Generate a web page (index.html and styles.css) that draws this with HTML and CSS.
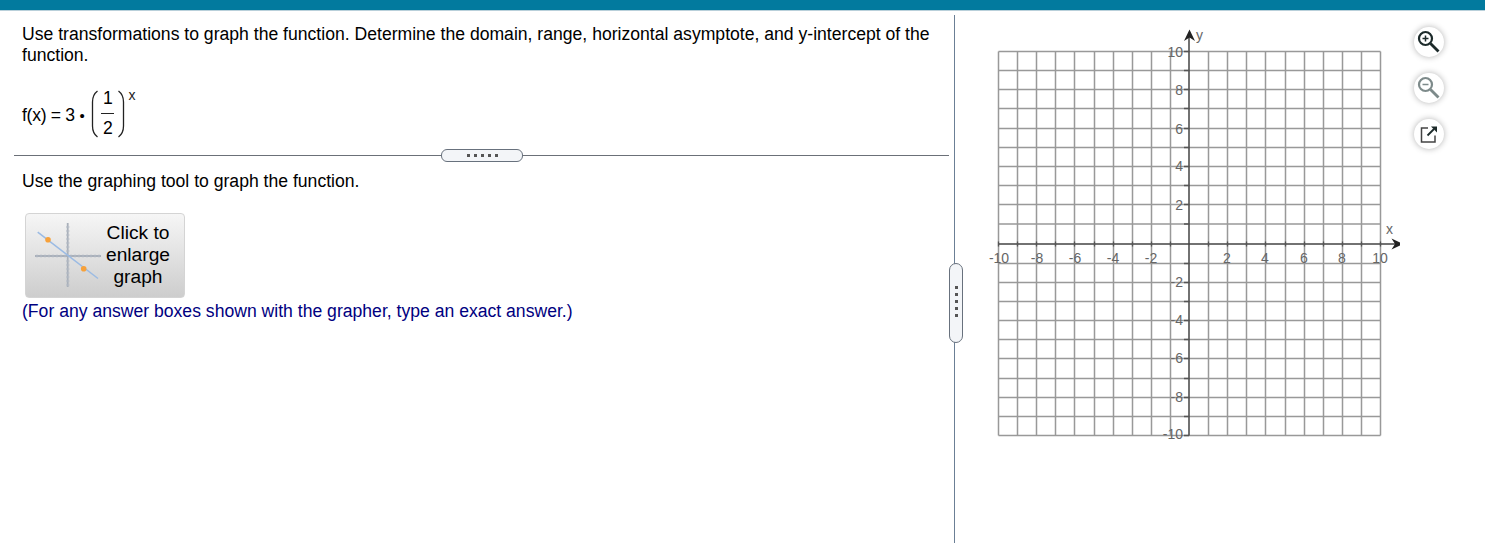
FILE: index.html
```html
<!DOCTYPE html>
<html lang="en">
<head>
<meta charset="utf-8">
<title>Graph the function</title>
<link rel="stylesheet" href="styles.css">
</head>
<body>
<header class="topbar"></header>
<main class="workspace">
  <section class="left-pane">
    <div class="question">
      <p class="prompt">Use transformations to graph the function. Determine the domain, range, horizontal asymptote, and y-intercept of the function.</p>
      <div class="formula">
        <span class="formula-lead">f(x) = 3 <span class="dot">•</span></span>
        <svg class="paren" viewBox="0 0 8 48" aria-hidden="true"><path d="M6.500 1 C2.500 4 1.500 7 1.500 12 L1.500 36 C1.500 41 2.500 44 6.500 47"/></svg>
        <span class="fraction"><span class="num">1</span><span class="den">2</span></span>
        <svg class="paren" viewBox="0 0 8 48" aria-hidden="true"><path d="M1.500 1 C5.500 4 6.500 7 6.500 12 L6.500 36 C6.500 41 5.500 44 1.500 47"/></svg>
        <span class="exponent">x</span>
      </div>
    </div>
    <div class="divider"><span class="h-handle"><i></i><i></i><i></i><i></i><i></i></span></div>
    <div class="answer">
      <p class="instruction">Use the graphing tool to graph the function.</p>
      <button class="enlarge" type="button">
        <svg class="enlarge-icon" viewBox="0 0 70 66" aria-hidden="true">
          <path class="mini-axis" d="M33.700 0 V64 M1 33 H67"/>
          <path class="mini-ticks" d="M3 31.500 V34.500 M7 31.500 V34.500 M11 31.500 V34.500 M15 31.500 V34.500 M19 31.500 V34.500 M23 31.500 V34.500 M27 31.500 V34.500 M31 31.500 V34.500 M37 31.500 V34.500 M41 31.500 V34.500 M45 31.500 V34.500 M49 31.500 V34.500 M53 31.500 V34.500 M57 31.500 V34.500 M61 31.500 V34.500 M65 31.500 V34.500 M32 4 H35.500 M32 8 H35.500 M32 12 H35.500 M32 16 H35.500 M32 20 H35.500 M32 24 H35.500 M32 28 H35.500 M32 38 H35.500 M32 42 H35.500 M32 46 H35.500 M32 50 H35.500 M32 54 H35.500 M32 58 H35.500 M32 62 H35.500"/>
          <path class="mini-line" d="M3.700 9.200 L64 55.500"/>
          <circle class="mini-point" cx="14" cy="16.800" r="2.800"/>
          <circle class="mini-point" cx="49.700" cy="45.800" r="2.800"/>
        </svg>
        <span class="enlarge-label">Click to enlarge graph</span>
      </button>
      <p class="note">(For any answer boxes shown with the grapher, type an exact answer.)</p>
    </div>
    <span class="v-handle"><i></i><i></i><i></i><i></i><i></i></span>
  </section>
  <section class="graph-pane">
    <svg class="graph" viewBox="980 15 420 440" aria-label="Coordinate grid">
      <path class="grid" d="M998.500 51.500 V435.500 M1017.500 51.500 V435.500 M1036.500 51.500 V435.500 M1055.500 51.500 V435.500 M1074.500 51.500 V435.500 M1094.500 51.500 V435.500 M1113.500 51.500 V435.500 M1132.500 51.500 V435.500 M1151.500 51.500 V435.500 M1170.500 51.500 V435.500 M1208.500 51.500 V435.500 M1227.500 51.500 V435.500 M1246.500 51.500 V435.500 M1265.500 51.500 V435.500 M1285.500 51.500 V435.500 M1304.500 51.500 V435.500 M1323.500 51.500 V435.500 M1342.500 51.500 V435.500 M1361.500 51.500 V435.500 M1380.500 51.500 V435.500"/>
      <path class="grid" d="M998.500 51.500 H1380.500 M998.500 70.500 H1380.500 M998.500 89.500 H1380.500 M998.500 108.500 H1380.500 M998.500 128.500 H1380.500 M998.500 147.500 H1380.500 M998.500 166.500 H1380.500 M998.500 185.500 H1380.500 M998.500 204.500 H1380.500 M998.500 224 H1380.500 M998.500 263.500 H1380.500 M998.500 282.500 H1380.500 M998.500 301.500 H1380.500 M998.500 320.500 H1380.500 M998.500 339.500 H1380.500 M998.500 358.500 H1380.500 M998.500 378.500 H1380.500 M998.500 397.500 H1380.500 M998.500 416.500 H1380.500 M998.500 435.500 H1380.500"/>
      <path class="axis" d="M998 244 H1396 M1189 435.500 V36"/>
      <path class="arrow" d="M1189.500 29.500 L1195 41 L1189.500 37.500 L1184 41 Z M1403 244 L1391.500 238.500 L1395 244 L1391.500 249.500 Z"/>
      <path class="ticks" d="M998.500 241.500 V246.500 M1017.500 241.500 V246.500 M1036.500 241.500 V246.500 M1055.500 241.500 V246.500 M1074.500 241.500 V246.500 M1094.500 241.500 V246.500 M1113.500 241.500 V246.500 M1132.500 241.500 V246.500 M1151.500 241.500 V246.500 M1170.500 241.500 V246.500 M1208.500 241.500 V246.500 M1227.500 241.500 V246.500 M1246.500 241.500 V246.500 M1265.500 241.500 V246.500 M1285.500 241.500 V246.500 M1304.500 241.500 V246.500 M1323.500 241.500 V246.500 M1342.500 241.500 V246.500 M1361.500 241.500 V246.500 M1380.500 241.500 V246.500"/>
      <path class="ticks" d="M1184 51.500 H1189 M1184 70.500 H1189 M1184 89.500 H1189 M1184 108.500 H1189 M1184 128.500 H1189 M1184 147.500 H1189 M1184 166.500 H1189 M1184 185.500 H1189 M1184 204.500 H1189 M1184 224 H1189 M1184 263.500 H1189 M1184 282.500 H1189 M1184 301.500 H1189 M1184 320.500 H1189 M1184 339.500 H1189 M1184 358.500 H1189 M1184 378.500 H1189 M1184 397.500 H1189 M1184 416.500 H1189 M1184 435.500 H1189"/>
      <g class="labels-x">
        <text x="999" y="263">-10</text><text x="1037" y="263">-8</text><text x="1075" y="263">-6</text><text x="1113" y="263">-4</text><text x="1151" y="263">-2</text>
        <text x="1227" y="263">2</text><text x="1265" y="263">4</text><text x="1304" y="263">6</text><text x="1342" y="263">8</text><text x="1380" y="263">10</text>
      </g>
      <g class="labels-y">
        <text x="1183" y="57">10</text><text x="1183" y="95">8</text><text x="1183" y="134">6</text><text x="1183" y="171">4</text><text x="1183" y="210">2</text>
        <text x="1183" y="287">-2</text><text x="1183" y="325">-4</text><text x="1183" y="363">-6</text><text x="1183" y="402">-8</text><text x="1183" y="439">-10</text>
      </g>
      <text class="axis-name" x="1196" y="40">y</text>
      <text class="axis-name" x="1386" y="234">x</text>
    </svg>
    <nav class="tools">
      <button class="tool" type="button" aria-label="Zoom in">
        <svg viewBox="0 0 30 30"><circle class="tool-dark" cx="11.500" cy="11.500" r="6.500"/><path class="tool-dark tool-thick" d="M16.500 16.500 L24.500 24.500"/><path class="tool-dark tool-thin" d="M8.500 11.500 H14.500 M11.500 8.500 V14.500"/></svg>
      </button>
      <button class="tool" type="button" aria-label="Zoom out">
        <svg viewBox="0 0 30 30"><circle class="tool-grey" cx="11.500" cy="11.500" r="6.500"/><path class="tool-grey tool-thick" d="M16.500 16.500 L24.500 24.500"/><path class="tool-grey tool-thin" d="M8.500 11.500 H14.500"/></svg>
      </button>
      <button class="tool" type="button" aria-label="Open in new window">
        <svg viewBox="0 0 30 30"><path class="tool-box" d="M14 9 H7.500 V23 H21 V16.500"/><path class="tool-dark tool-arrow" d="M13.500 16.500 L20 10"/><path class="tool-fill" d="M17 7.500 H23 V13.500 Z"/></svg>
      </button>
    </nav>
  </section>
</main>
</body>
</html>
```
FILE: styles.css
```css
* { box-sizing: border-box; }
html, body { margin: 0; height: 100%; }
body {
  display: flex;
  flex-direction: column;
  height: 543px;
  overflow: hidden;
  background: #fff;
  color: #000;
  font-family: "Liberation Sans", Arial, sans-serif;
  font-size: 17.6px;
  line-height: 22px;
}
p { margin: 0; }
.topbar {
  flex: none;
  height: 11px;
  background: #027a9e;
  border-bottom: 1px solid #b9d0da;
}
.workspace {
  flex: 1;
  display: flex;
  margin-top: 4px;
  min-height: 0;
}
.left-pane {
  position: relative;
  flex: none;
  width: 955px;
  border-right: 1px solid #6b7f95;
}
.question { height: 140px; padding: 9px 20px 0 22px; }
.prompt { line-height: 21px; }
.formula {
  display: flex;
  align-items: center;
  height: 48px;
  margin-top: 24px;
}
.formula-lead { margin: 2px 7px 0 0; letter-spacing: -0.3px; white-space: nowrap; }
.dot { font-size: 15px; }
.paren { width: 8px; height: 48px; flex: none; }
.paren path { fill: none; stroke: #222; stroke-width: 1.300; }
.fraction {
  display: flex;
  flex-direction: column;
  align-items: center;
  width: 13px;
  margin: 0 3px 0 2px;
}
.num { width: 100%; padding-bottom: 4px; text-align: center; border-bottom: 1px solid #222; }
.den { width: 100%; padding: 3px 0 2px; text-align: center; }
.exponent { align-self: flex-start; margin: -4px 0 0 3px; font-size: 14px; line-height: 18px; color: #222; }
.divider {
  position: relative;
  height: 1px;
  margin: 0 5px 0 14px;
  background: #6b7078;
}
.h-handle, .v-handle {
  position: absolute;
  display: flex;
  align-items: center;
  justify-content: center;
  background: #f3f5f8;
  border: 1px solid #68717d;
}
.h-handle { left: 427px; top: -6px; width: 82px; height: 13px; gap: 4px; border-radius: 6px; }
.h-handle i, .v-handle i { display: block; width: 3px; height: 3px; background: #555; }
.v-handle {
  right: -9px;
  top: 248px;
  width: 14px;
  height: 80px;
  flex-direction: column;
  gap: 4px;
  padding-bottom: 4px;
  border-radius: 7px;
}
.answer { padding: 14px 20px 0 22px; }
.instruction { height: 22px; }
.enlarge {
  display: flex;
  align-items: center;
  width: 160px;
  height: 85px;
  margin: 21px 0 0 3px;
  padding: 0;
  border: 1px solid #d4d4d4;
  border-radius: 4px;
  background: linear-gradient(#f6f6f6, #cdcdcd);
  font: inherit;
  font-size: 19.2px;
  color: #000;
}
.enlarge-icon { flex: none; width: 70px; height: 66px; margin-left: 8px; }
.mini-axis { fill: none; stroke: #a9b0ba; stroke-width: 1.800; }
.mini-ticks { fill: none; stroke: #b4bbc6; stroke-width: 1; }
.mini-line { fill: none; stroke: #9bbbe4; stroke-width: 1.500; }
.mini-point { fill: #f7a13a; }
.enlarge-label { flex: none; width: 70px; margin: -2px 0 0 -1px; text-align: center; }
.note { margin-top: 2px; color: #000080; }
.graph-pane {
  flex: 1;
  display: flex;
  align-items: flex-start;
  min-width: 0;
}
.graph { flex: none; width: 420px; height: 440px; margin-left: 25px; }
.grid { fill: none; stroke: #999; stroke-width: 1.500; }
.axis { fill: none; stroke: #444; stroke-width: 1.500; }
.arrow { fill: #222; }
.ticks { fill: none; stroke: #555; stroke-width: 1.300; }
.labels-x text, .labels-y text, .axis-name { font-size: 14px; fill: #666; }
.labels-x text { text-anchor: middle; }
.labels-y text { text-anchor: end; }
.tools {
  display: flex;
  flex-direction: column;
  gap: 16px;
  margin: 12px 0 0 14px;
}
.tool {
  display: block;
  width: 30px;
  height: 30px;
  padding: 0;
  border: 0;
  border-radius: 50%;
  background: #fff;
  box-shadow: 0 0 6px rgba(0, 0, 0, 0.3);
}
.tool svg { display: block; width: 30px; height: 30px; }
.tool-dark, .tool-grey { fill: none; stroke-width: 2.200; }
.tool-dark { stroke: #1c2a2a; }
.tool-grey { stroke: #7d8a8a; }
.tool-thick { stroke-width: 2.800; }
.tool-thin { stroke-width: 1.500; }
.tool-arrow { stroke-width: 1.800; }
.tool-box { fill: none; stroke-width: 1.500; stroke: #444; }
.tool-fill { fill: #1c2a2a; }
```
